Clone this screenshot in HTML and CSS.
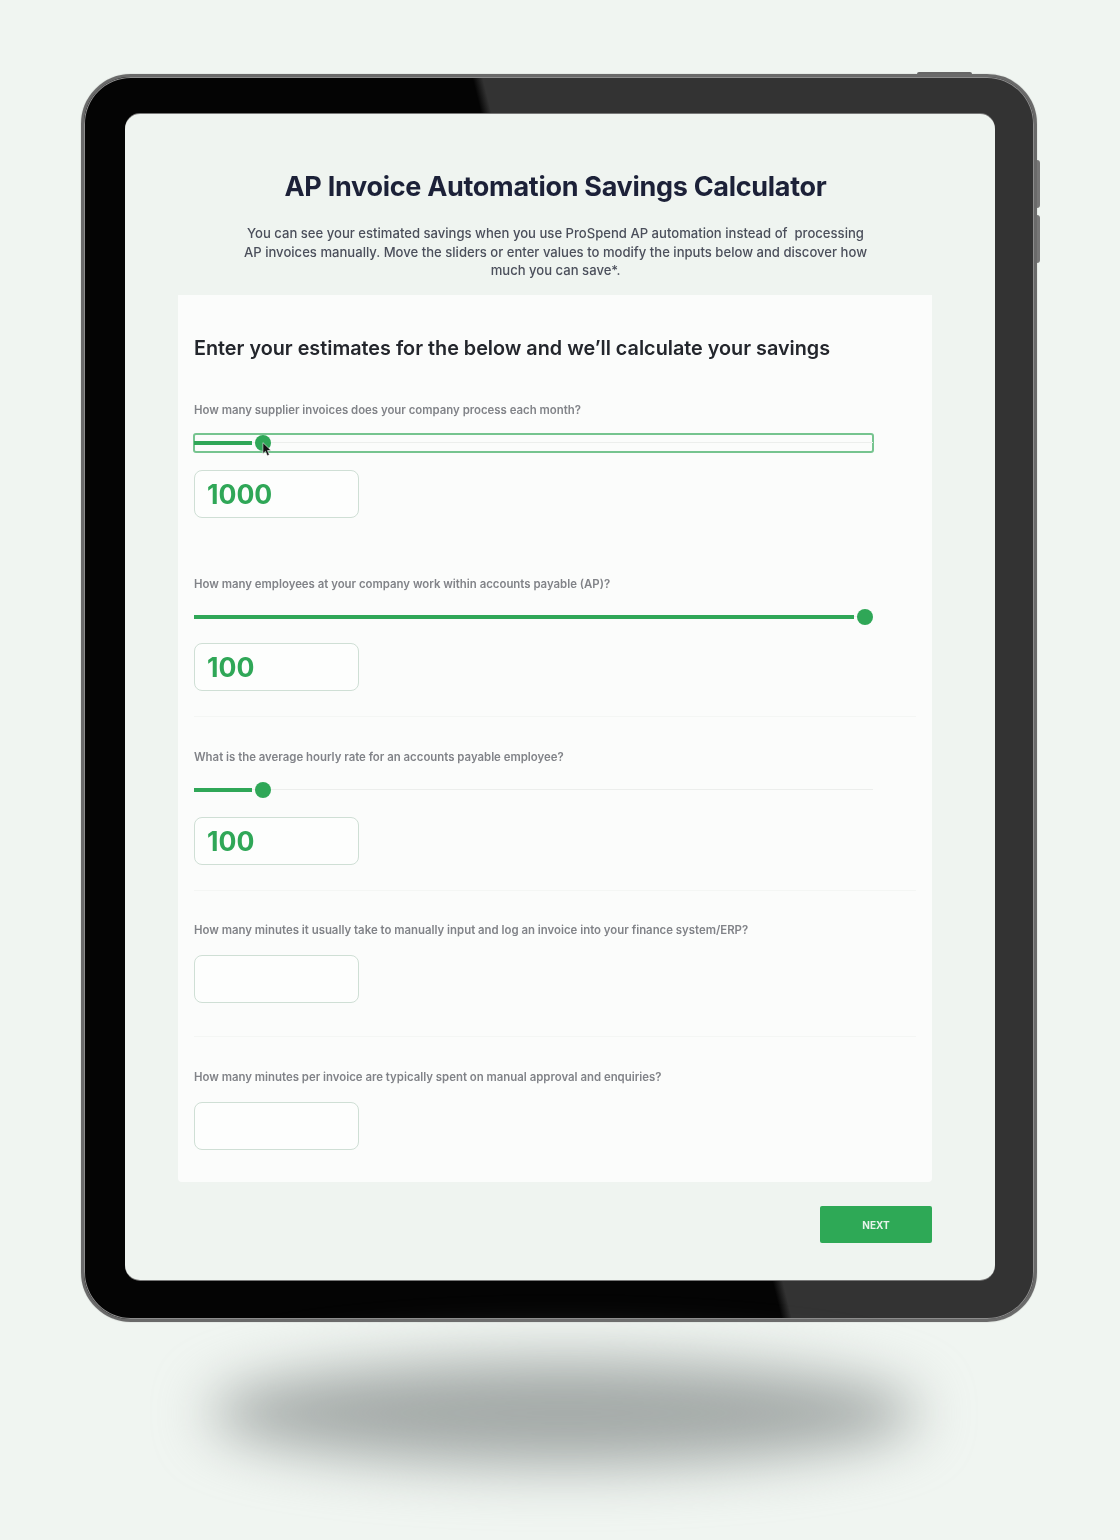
FILE: index.html
```html
<!DOCTYPE html>
<html lang="en">
<head>
<meta charset="utf-8">
<title>AP Invoice Automation Savings Calculator</title>
<link rel="stylesheet" href="styles.css">
</head>
<body>
<div class="stage">
  <div class="tablet">
    <span class="btn-top"></span>
    <span class="btn-side btn-side-a"></span>
    <span class="btn-side btn-side-b"></span>
    <main class="screen">
      <h1 class="title">AP Invoice Automation Savings Calculator</h1>
      <p class="intro">You can see your estimated savings when you use ProSpend AP automation instead of &nbsp;processing<br>AP invoices manually. Move the sliders or enter values to modify the inputs below and discover how<br>much you can save*.</p>
      <section class="card">
        <h2 class="card-title">Enter your estimates for the below and we’ll calculate your savings</h2>
        <div class="field field-a">
          <div class="label">How many supplier invoices does your company process each month?</div>
          <div class="slider slider-focus">
            <div class="track"></div>
            <div class="fill fill-short"></div>
            <div class="thumb thumb-short"></div>
            <svg class="cursor" viewBox="0 0 12 16" width="11" height="15"><path d="M1 0.5 L1 12.5 L3.8 10 L5.8 14.8 L8 13.8 L6 9.2 L9.8 9 Z" fill="#111" stroke="#fff" stroke-width=".6"/></svg>
          </div>
          <div class="box">1000</div>
        </div>
        <div class="field field-b">
          <div class="label">How many employees at your company work within accounts payable (AP)?</div>
          <div class="slider">
            <div class="track"></div>
            <div class="fill fill-full"></div>
            <div class="thumb thumb-full"></div>
          </div>
          <div class="box box-tight">100</div>
        </div>
        <hr class="rule">
        <div class="field field-after-b">
          <div class="label">What is the average hourly rate for an accounts payable employee?</div>
          <div class="slider">
            <div class="track"></div>
            <div class="fill fill-short"></div>
            <div class="thumb thumb-short"></div>
          </div>
          <div class="box">100</div>
        </div>
        <hr class="rule">
        <div class="field field-c">
          <div class="label">How many minutes it usually take to manually input and log an invoice into your finance system/ERP?</div>
          <div class="box box-tight"></div>
        </div>
        <hr class="rule rule-low">
        <div class="field field-d">
          <div class="label">How many minutes per invoice are typically spent on manual approval and enquiries?</div>
          <div class="box box-tight"></div>
        </div>
      </section>
      <div class="actions"><button class="next" type="button">NEXT</button></div>
    </main>
  </div>
  <div class="shadow"></div>
</div>
</body>
</html>
```
FILE: styles.css
```css
* { box-sizing: border-box; }
html, body { margin: 0; padding: 0; }
body {
  background: #f0f5f1;
  font-family: Inter, "Liberation Sans", sans-serif;
  width: 1120px;
  height: 1540px;
  overflow: hidden;
}
.stage { padding: 74px 0 0 81px; }
.tablet {
  position: relative;
  width: 956px;
  height: 1248px;
  padding: 37px 39px 39px 41px;
  border: 3px solid #6a6a6a;
  border-radius: 50px;
  background: linear-gradient(76deg, #040404 calc(50% + 66px), #333333 calc(50% + 76px));
  box-shadow: inset 0 0 0 1px #8d8d8d, 0 0 1px rgba(60,60,60,.5);
}
.btn-top {
  position: absolute;
  left: 833px;
  top: -5px;
  width: 55px;
  height: 2px;
  background: #666;
  border-radius: 2px 2px 0 0;
}
.btn-side {
  position: absolute;
  right: -6px;
  width: 3px;
  height: 48px;
  background: #777;
  border-radius: 0 3px 3px 0;
}
.btn-side-a { top: 83px; }
.btn-side-b { top: 138px; }
.screen {
  height: 100%;
  background: #eff4f0;
  border-radius: 15px;
  padding: 55px 63px 0 53px;
  box-shadow: 0 -1px 0 #777, 0 1px 0 #777;
  filter: blur(0.3px);
}
.title {
  margin: 0 0 0 1px;
  text-align: center;
  font-size: 27px;
  line-height: 36px;
  font-weight: 700;
  letter-spacing: -0.3px;
  color: #1c2138;
}
.intro {
  margin: 19px 0 0 1px;
  text-align: center;
  font-size: 13.1px;
  line-height: 18.5px;
  font-weight: 500;
  color: #4b4f5b;
}
.card {
  margin-top: 15.5px;
  height: 887px;
  padding: 38px 16px 0;
  background: #fbfcfb;
  border-radius: 0 0 4px 4px;
}
.card-title {
  margin: 0;
  font-size: 19.8px;
  line-height: 30px;
  font-weight: 600;
  color: #23262c;
}
.field-a { margin-top: 39px; }
.field-b { margin-top: 58px; }
.field-after-b { margin-top: 32px; }
.field-c { margin-top: 31px; }
.field-d { margin-top: 32px; }
.rule {
  height: 1px;
  margin: 25px 0 0;
  border: 0;
  background: #f4f6f4;
}
.rule-low { margin-top: 33px; }
.label {
  font-size: 11.4px;
  line-height: 16px;
  font-weight: 600;
  color: #818388;
}
.slider {
  position: relative;
  width: 679px;
  height: 18px;
  margin-top: 16px;
  border-radius: 2px;
}
.slider-focus { outline: 2px solid #76c48f; outline-offset: -1px; }
.track {
  position: absolute;
  left: 0;
  right: 0;
  top: 8px;
  height: 1px;
  background: #eceeec;
}
.fill {
  position: absolute;
  left: 0;
  top: 7px;
  height: 4px;
  background: #2fa757;
}
.fill-short { width: 58px; }
.fill-full { width: 660px; }
.thumb {
  position: absolute;
  top: 1px;
  width: 16px;
  height: 16px;
  border-radius: 50%;
  background: #2fa757;
}
.thumb-short { left: 60.5px; }
.thumb-full { left: 663px; }
.cursor {
  position: absolute;
  left: 68px;
  top: 8px;
}
.box {
  width: 165px;
  height: 48px;
  margin-top: 18px;
  padding-left: 12px;
  border: 1px solid #cfdfd5;
  border-radius: 8px;
  background: #fdfefd;
  color: #2fa757;
  font-size: 26.6px;
  line-height: 46px;
  font-weight: 700;
}
.box-tight { margin-top: 17px; }
.actions { display: flex; justify-content: flex-end; margin-top: 24px; }
.next {
  width: 112px;
  height: 37px;
  padding: 0;
  border: 0;
  border-radius: 2px;
  background: #2ea956;
  color: #e6f3ea;
  font-family: Inter, "Liberation Sans", sans-serif;
  font-size: 10px;
  font-weight: 700;
}
.shadow {
  width: 710px;
  height: 104px;
  margin: 39px 0 0 128px;
  border-radius: 50%;
  background: #a3a9a7;
  filter: blur(28px);
}
```
